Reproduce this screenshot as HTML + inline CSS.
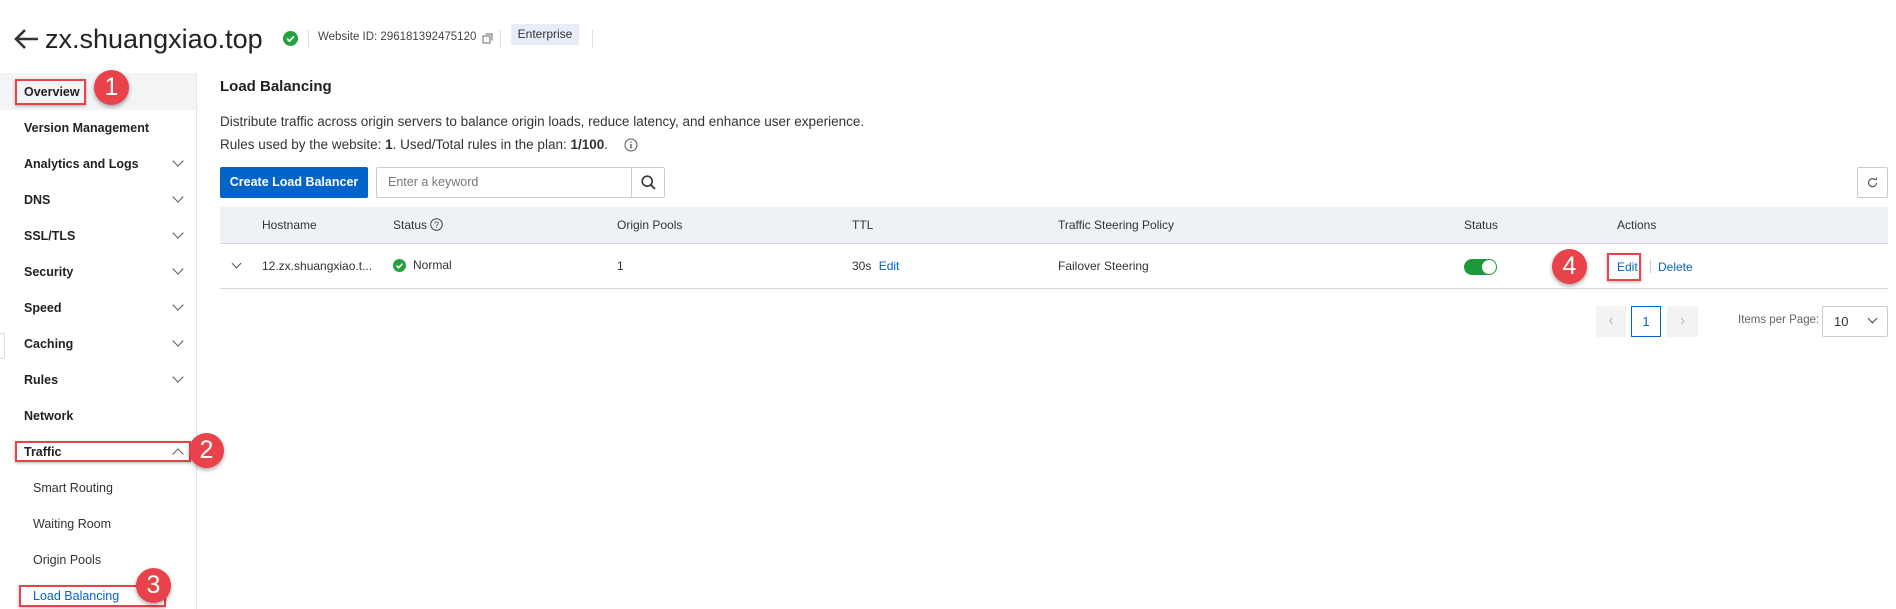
<!DOCTYPE html>
<html><head><meta charset="utf-8"><style>
*{margin:0;padding:0;box-sizing:border-box}
body{width:1896px;height:609px;background:#fff;font-family:"Liberation Sans",sans-serif;color:#333;position:relative;overflow:hidden;font-size:13px}
.a{position:absolute;white-space:nowrap}
.side{left:24px;font-size:12.5px;color:#222;font-weight:bold;transform:translateY(-50%)}
.sub{left:33px;font-size:12.5px;color:#333;transform:translateY(-50%)}
.chev{position:absolute;left:174px;width:8px;height:8px;border-right:1.4px solid #555;border-bottom:1.4px solid #555;transform:rotate(45deg)}
.red{position:absolute;border:2.5px solid #e8434a;box-shadow:0 1px 3px rgba(0,0,0,.3)}
.circ{position:absolute;width:35px;height:35px;border-radius:50%;background:#e8434a;color:#fff;font-size:25px;text-align:center;line-height:35px;box-shadow:0 2px 4px rgba(0,0,0,.35)}
.th{top:225px;transform:translateY(-50%);font-size:12px;color:#333}
.td{top:266px;transform:translateY(-50%);font-size:12px;color:#333}
.lnk{color:#0064c8}
</style></head><body>
<svg class="a" style="left:14px;top:28px" width="26" height="22" viewBox="0 0 26 22"><path d="M24 11H3M11 2L2 11l9 9" stroke="#333" stroke-width="2.6" fill="none"/></svg>
<div class="a" style="left:45px;top:22px;font-size:27px;color:#222;line-height:34px">zx.shuangxiao.top</div>
<svg class="a" style="left:283px;top:31px" width="15" height="15" viewBox="0 0 16 16"><circle cx="8" cy="8" r="8" fill="#23a13c"/><path d="M4.3 8.2l2.6 2.5 4.8-5" stroke="#fff" stroke-width="2" fill="none"/></svg>
<div class="a" style="left:308px;top:30px;width:1px;height:18px;background:#ddd"></div>
<div class="a" style="left:318px;top:31px;font-size:11.5px;color:#444">Website ID: 296181392475120</div>
<svg class="a" style="left:482px;top:33px" width="11" height="11" viewBox="0 0 11 11"><rect x="1" y="3" width="7" height="7" fill="none" stroke="#666"/><path d="M3.5 1H10v6.5" fill="none" stroke="#666"/></svg>
<div class="a" style="left:500px;top:30px;width:1px;height:18px;background:#ddd"></div>
<div class="a" style="left:511px;top:24px;width:68px;height:21px;background:#e6edf8;font-size:12px;color:#333;text-align:center;line-height:21px">Enterprise</div>
<div class="a" style="left:592px;top:30px;width:1px;height:18px;background:#ddd"></div>
<div class="a" style="left:0;top:73px;width:196px;height:37px;background:#f3f4f6"></div>
<div class="a" style="left:196px;top:73px;width:1px;height:536px;background:#e5e5e5"></div>
<div class="a" style="left:0;top:333px;width:5px;height:26px;border:1px solid #ddd;border-left:none;background:#fff"></div>
<div class="a side" style="top:92px">Overview</div>
<div class="a side" style="top:128px">Version Management</div>
<div class="a side" style="top:164px">Analytics and Logs</div><div class="chev" style="top:157px"></div>
<div class="a side" style="top:200px">DNS</div><div class="chev" style="top:193px"></div>
<div class="a side" style="top:236px">SSL/TLS</div><div class="chev" style="top:229px"></div>
<div class="a side" style="top:272px">Security</div><div class="chev" style="top:265px"></div>
<div class="a side" style="top:308px">Speed</div><div class="chev" style="top:301px"></div>
<div class="a side" style="top:344px">Caching</div><div class="chev" style="top:337px"></div>
<div class="a side" style="top:380px">Rules</div><div class="chev" style="top:373px"></div>
<div class="a side" style="top:416px">Network</div>
<div class="a side" style="top:452px">Traffic</div><div class="chev" style="top:450px;transform:rotate(225deg)"></div>
<div class="a sub" style="top:488px">Smart Routing</div>
<div class="a sub" style="top:524px">Waiting Room</div>
<div class="a sub" style="top:560px">Origin Pools</div>
<div class="a sub" style="top:596px;color:#0064c8">Load Balancing</div>
<div class="red" style="left:15px;top:79px;width:71px;height:26px"></div>
<div class="circ" style="left:94px;top:70px">1</div>
<div class="red" style="left:15px;top:441px;width:176px;height:21px"></div>
<div class="circ" style="left:189px;top:433px">2</div>
<div class="red" style="left:19px;top:585px;width:147px;height:22px"></div>
<div class="circ" style="left:136px;top:568px">3</div>
<div class="a" style="left:220px;top:78px;font-size:15px;font-weight:bold;color:#222">Load Balancing</div>
<div class="a" style="left:220px;top:114px;font-size:13.5px;color:#333">Distribute traffic across origin servers to balance origin loads, reduce latency, and enhance user experience.</div>
<div class="a" style="left:220px;top:137px;font-size:13.5px;color:#333">Rules used by the website: <b>1</b>. Used/Total rules in the plan: <b>1/100</b>.</div>
<svg class="a" style="left:624px;top:138px" width="14" height="14" viewBox="0 0 14 14"><circle cx="7" cy="7" r="6" fill="none" stroke="#555"/><path d="M7 6v4.5M7 3.5v1.3" stroke="#555" stroke-width="1.3"/></svg>
<div class="a" style="left:220px;top:167px;width:148px;height:31px;background:#0064c8;border-radius:2px;color:#fff;font-weight:bold;font-size:12.5px;text-align:center;line-height:31px">Create Load Balancer</div>
<div class="a" style="left:376px;top:167px;width:289px;height:31px;border:1px solid #ccc;border-radius:2px"></div>
<div class="a" style="left:631px;top:167px;width:1px;height:31px;background:#ccc"></div>
<div class="a" style="left:388px;top:175px;font-size:12.5px;color:#777">Enter a keyword</div>
<svg class="a" style="left:641px;top:175px" width="15" height="15" viewBox="0 0 15 15"><circle cx="6.2" cy="6.2" r="5" fill="none" stroke="#333" stroke-width="1.6"/><path d="M10 10l4 4" stroke="#333" stroke-width="1.8"/></svg>
<div class="a" style="left:1857px;top:167px;width:31px;height:31px;border:1px solid #ccc;border-radius:2px"></div>
<svg class="a" style="left:1867px;top:177px" width="11" height="11" viewBox="0 0 11 11"><path d="M8.5 3A4 4 0 1 0 9.5 6" fill="none" stroke="#555" stroke-width="1.1"/><path d="M6.5 2.5h3v-2" fill="none" stroke="#555"/></svg>
<div class="a" style="left:220px;top:207px;width:1668px;height:37px;background:#eef1f6;border-bottom:1px solid #d8d8d8"></div>
<div class="a" style="left:220px;top:288px;width:1668px;height:1px;background:#d8d8d8"></div>
<div class="a th" style="left:262px">Hostname</div>
<div class="a th" style="left:393px">Status</div>
<svg class="a" style="left:430px;top:218px" width="13" height="13" viewBox="0 0 13 13"><circle cx="6.5" cy="6.5" r="5.8" fill="none" stroke="#444"/><text x="6.5" y="9.8" font-size="9" text-anchor="middle" fill="#444" font-family="Liberation Sans">?</text></svg>
<div class="a th" style="left:617px">Origin Pools</div>
<div class="a th" style="left:852px">TTL</div>
<div class="a th" style="left:1058px">Traffic Steering Policy</div>
<div class="a th" style="left:1464px">Status</div>
<div class="a th" style="left:1617px">Actions</div>
<div class="chev" style="left:233px;top:260px;width:7px;height:7px"></div>
<div class="a td" style="left:262px">12.zx.shuangxiao.t...</div>
<svg class="a" style="left:393px;top:259px" width="13" height="13" viewBox="0 0 16 16"><circle cx="8" cy="8" r="8" fill="#23a13c"/><path d="M4.3 8.2l2.6 2.5 4.8-5" stroke="#fff" stroke-width="2" fill="none"/></svg>
<div class="a td" style="left:413px;top:265px">Normal</div>
<div class="a td" style="left:617px">1</div>
<div class="a td" style="left:852px">30s <span class="lnk" style="margin-left:4px">Edit</span></div>
<div class="a td" style="left:1058px">Failover Steering</div>
<div class="a" style="left:1464px;top:259px;width:33px;height:16px;border-radius:8px;background:#1a9a3a"></div>
<div class="a" style="left:1482px;top:260px;width:14px;height:14px;border-radius:50%;background:#fff"></div>
<div class="a td lnk" style="left:1617px;top:267px">Edit</div>
<div class="a" style="left:1650px;top:260px;width:1px;height:13px;background:#ccc"></div>
<div class="a td lnk" style="left:1658px;top:267px">Delete</div>
<div class="red" style="left:1607px;top:253px;width:34px;height:28px"></div>
<div class="circ" style="left:1552px;top:249px">4</div>
<div class="a" style="left:1596px;top:306px;width:30px;height:31px;background:#f3f3f3;color:#bbb;text-align:center;line-height:30px;font-size:16px">‹</div>
<div class="a" style="left:1631px;top:306px;width:30px;height:31px;border:1px solid #0064c8;color:#0064c8;text-align:center;line-height:29px;font-size:13px">1</div>
<div class="a" style="left:1667px;top:306px;width:31px;height:31px;background:#f3f3f3;color:#bbb;text-align:center;line-height:30px;font-size:16px">›</div>
<div class="a" style="left:1738px;top:314px;font-size:11.5px;color:#666">Items per Page:</div>
<div class="a" style="left:1822px;top:306px;width:66px;height:31px;border:1px solid #ccc;border-radius:2px"></div>
<div class="a" style="left:1834px;top:314px;font-size:13px;color:#333">10</div>
<div class="chev" style="left:1869px;top:315px;width:7px;height:7px;border-color:#444"></div>
</body></html>
